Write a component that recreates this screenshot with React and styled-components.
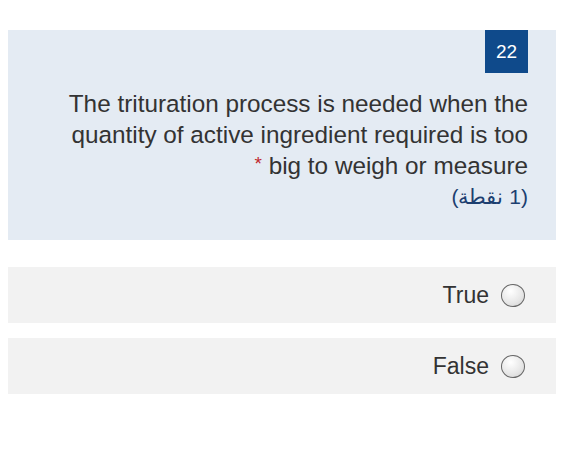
import React from "react";
import styled, { createGlobalStyle } from "styled-components";

const GlobalStyle = createGlobalStyle`
  html, body {
    margin: 0;
    padding: 0;
    background: #ffffff;
    font-family: "Liberation Sans", Arial, sans-serif;
  }
`;

const options = ["True", "False"];

const App = () => (
  <>
    <GlobalStyle />
    <Page>
      <QuestionCard>
        <Number>22</Number>
        <QuestionText>
          The trituration process is needed when the quantity of active
          ingredient required is too big to weigh or measure{" "}
          <Required>*</Required>
        </QuestionText>
        <Points>(1 نقطة)</Points>
      </QuestionCard>
      <Options>
        {options.map((label) => (
          <Option key={label}>
            <span>{label}</span>
            <Radio />
          </Option>
        ))}
      </Options>
    </Page>
  </>
);

export default App;

const Page = styled.div`
  width: 548px;
  padding: 30px 0 0 8px;
`;

const QuestionCard = styled.div`
  display: flex;
  flex-direction: column;
  align-items: flex-end;
  background: #e4ebf3;
  padding: 0 28px 28px 50px;
`;

const Number = styled.div`
  display: flex;
  align-items: center;
  justify-content: center;
  width: 43px;
  height: 43px;
  background: #0f4a8b;
  color: #ffffff;
  font-size: 19px;
  margin-bottom: 15px;
`;

const QuestionText = styled.div`
  direction: rtl;
  text-align: right;
  font-size: 24.3px;
  line-height: 31px;
  color: #333333;
`;

const Required = styled.span`
  color: #c0282d;
  font-size: 19px;
  line-height: 0;
  vertical-align: 4px;
`;

const Points = styled.div`
  direction: rtl;
  font-size: 21px;
  line-height: 31px;
  color: #1d3f70;
`;

const Options = styled.div`
  display: flex;
  flex-direction: column;
  gap: 15px;
  margin-top: 27px;
`;

const Option = styled.div`
  display: flex;
  align-items: center;
  justify-content: flex-end;
  gap: 12px;
  height: 56px;
  background: #f2f2f2;
  padding-right: 31px;
  font-size: 23px;
  color: #333333;
`;

const Radio = styled.span`
  width: 24px;
  height: 23px;
  border-radius: 50%;
  border: 1.5px solid #666666;
  background: radial-gradient(circle at 40% 30%, #ffffff 0%, #e6e6e6 60%, #cfcfcf 100%);
  box-sizing: border-box;
`;
